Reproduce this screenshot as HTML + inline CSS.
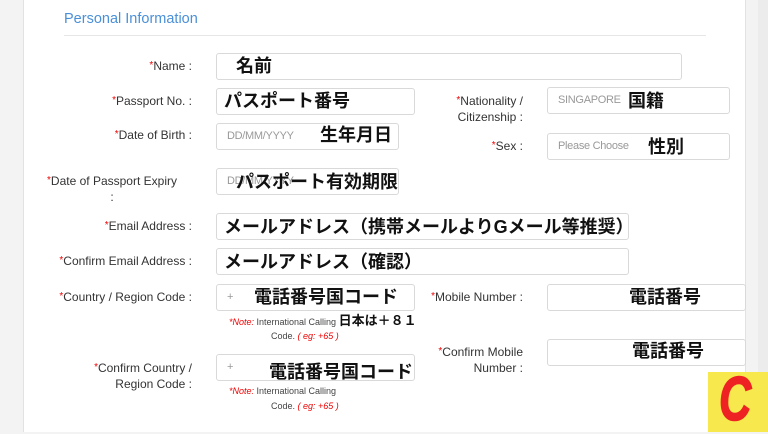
<!DOCTYPE html>
<html><head><meta charset="utf-8"><style>
*{margin:0;padding:0;box-sizing:border-box}
body{width:768px;height:432px;overflow:hidden;background:#f3f3f3;position:relative;font-family:"Liberation Sans","Noto Sans CJK JP",sans-serif}
.card{position:absolute;left:23px;top:0;width:723px;height:432px;background:#fff;border-left:1px solid #e2e2e2;border-right:1px solid #e2e2e2}
.bar{position:absolute;left:758px;top:0;width:10px;height:432px;background:#ececec}
.a{position:absolute}
.t{color:#4a90d9;font-size:14.5px;left:64px;top:11px}
.hr{left:64px;top:35px;width:642px;height:1px;background:#e6e6e6}
.l{font-size:12px;color:#333;text-align:right;line-height:16px;white-space:nowrap}
.l b{color:#e00;font-weight:normal;font-size:10px;vertical-align:top}
.i{border:1px solid #d9d9d9;border-radius:3px;background:#fff;height:27px}
.ph{font-size:11px;color:#999;line-height:25px;padding-left:10px;letter-spacing:-0.3px}
.j{font-size:18px;font-weight:bold;color:#111;white-space:nowrap;line-height:22px}
.n{font-size:9px;color:#444;white-space:nowrap;line-height:14px;height:14px}
.n i,.n em{color:#e00}
</style></head><body>
<div class="card"></div><div class="bar"></div>
<div class="a t">Personal Information</div>
<div class="a hr"></div>

<div class="a l" style="right:576px;top:58px"><b>*</b>Name :</div>
<div class="a i" style="left:216px;top:53px;width:466px"></div>
<div class="a j" style="left:236px;top:55px">名前</div>

<div class="a l" style="right:576px;top:93px"><b>*</b>Passport No. :</div>
<div class="a i" style="left:216px;top:88px;width:199px"></div>
<div class="a j" style="left:224px;top:90px">パスポート番号</div>

<div class="a l" style="right:245px;top:93px"><b>*</b>Nationality /<br>Citizenship :</div>
<div class="a i ph" style="left:547px;top:87px;width:183px">SINGAPORE</div>
<div class="a j" style="left:628px;top:90px">国籍</div>

<div class="a l" style="right:576px;top:127px"><b>*</b>Date of Birth :</div>
<div class="a i ph" style="left:216px;top:123px;width:183px">DD/MM/YYYY</div>
<div class="a j" style="left:320px;top:124px">生年月日</div>

<div class="a l" style="right:245px;top:138px"><b>*</b>Sex :</div>
<div class="a i ph" style="left:547px;top:133px;width:183px">Please Choose</div>
<div class="a j" style="left:648px;top:136px">性別</div>

<div class="a l" style="top:173px;text-align:center;width:160px;left:32px"><b>*</b>Date of Passport Expiry<br>:</div>
<div class="a i ph" style="left:216px;top:168px;width:183px">DD/MM/YYYY</div>
<div class="a j" style="left:236px;top:171px">パスポート有効期限</div>

<div class="a l" style="right:576px;top:218px"><b>*</b>Email Address :</div>
<div class="a i" style="left:216px;top:213px;width:413px"></div>
<div class="a j" style="left:224px;top:216px">メールアドレス（携帯メールよりGメール等推奨）</div>

<div class="a l" style="right:576px;top:253px"><b>*</b>Confirm Email Address :</div>
<div class="a i" style="left:216px;top:248px;width:413px"></div>
<div class="a j" style="left:224px;top:251px">メールアドレス（確認）</div>

<div class="a l" style="right:576px;top:289px"><b>*</b>Country / Region Code :</div>
<div class="a i ph" style="left:216px;top:284px;width:199px">+</div>
<div class="a j" style="left:254px;top:286px">電話番号国コード</div>
<div class="a n" style="left:229px;top:314px"><i>*Note:</i> International Calling <span style="font-size:13px;font-weight:bold;color:#111;line-height:14px">日本は＋８１</span></div>
<div class="a n" style="left:271px;top:329px">Code. <em>( eg: +65 )</em></div>

<div class="a l" style="right:245px;top:289px"><b>*</b>Mobile Number :</div>
<div class="a i" style="left:547px;top:284px;width:199px"></div>
<div class="a j" style="left:629px;top:286px">電話番号</div>

<div class="a l" style="right:576px;top:360px"><b>*</b>Confirm Country /<br>Region Code :</div>
<div class="a i ph" style="left:216px;top:354px;width:199px">+</div>
<div class="a j" style="left:269px;top:361px">電話番号国コード</div>
<div class="a n" style="left:229px;top:384px"><i>*Note:</i> International Calling</div>
<div class="a n" style="left:271px;top:399px">Code. <em>( eg: +65 )</em></div>

<div class="a l" style="right:245px;top:344px"><b>*</b>Confirm Mobile<br>Number :</div>
<div class="a i" style="left:547px;top:339px;width:199px"></div>
<div class="a j" style="left:632px;top:340px">電話番号</div>

<div class="a" style="left:708px;top:372px;width:60px;height:60px;background:#f7e84d;overflow:hidden"></div>
<div class="a" style="left:719px;top:367px;font-family:'Liberation Sans',sans-serif;font-size:62px;font-weight:bold;font-style:italic;color:#ee2222;line-height:66px;transform:scaleX(0.72);transform-origin:left top;-webkit-text-stroke:1.5px #ee2222">C</div>
</body></html>
